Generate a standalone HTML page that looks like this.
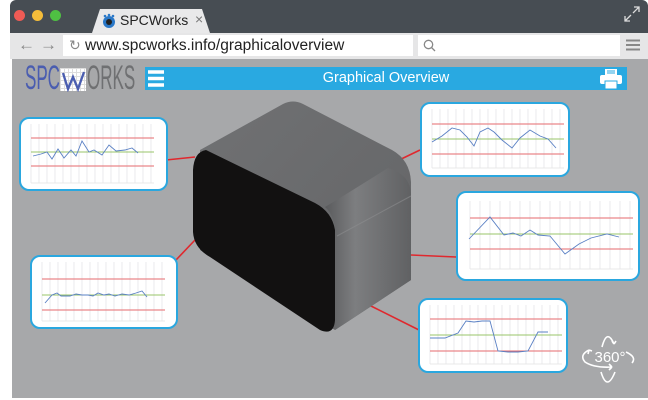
<!DOCTYPE html>
<html><head><meta charset="utf-8"><style>
*{margin:0;padding:0;box-sizing:border-box}
body{width:648px;height:400px;background:#fff;position:relative;overflow:hidden;font-family:"Liberation Sans",sans-serif}
.top{position:absolute;left:10px;top:0;width:638px;height:33px;background:#474d53;border-radius:6px 6px 0 0}
.dot{position:absolute;top:10px;width:11px;height:11px;border-radius:50%}
.tab{position:absolute;left:92px;top:9px;width:118px;height:24px;background:#e9e9ea;clip-path:polygon(8px 0,110px 0,118px 24px,0 24px)}
.addr{position:absolute;left:10px;top:33px;width:638px;height:26px;background:#e6e6e7}
.url{position:absolute;left:63px;top:35px;width:350px;height:21px;background:#fff;font-size:15.5px;color:#222;line-height:21px;padding-left:22px}
.search{position:absolute;left:418px;top:35px;width:202px;height:21px;background:#fff}
.content{position:absolute;left:12px;top:59px;width:636px;height:339px;background:#a7a8aa}
.bar{position:absolute;left:145px;top:67px;width:482px;height:23px;background:#29a9e1;color:#fff;font-size:14.5px;text-align:center;line-height:23px}
.logo{position:absolute;top:61px;font-family:"Liberation Sans",sans-serif;font-size:34px;line-height:34px;transform:scaleX(.5);transform-origin:left}
.card{position:absolute;background:#fff;border:2px solid #2aa7df;border-radius:10px;overflow:hidden}
</style></head><body>
<div class="top">
<div class="dot" style="left:4px;background:#ee5b55"></div>
<div class="dot" style="left:22px;background:#f5bd3a"></div>
<div class="dot" style="left:40px;background:#4fc043"></div>
<svg style="position:absolute;right:8px;top:6px" width="16" height="16" viewBox="0 0 16 16" fill="none" stroke="#ddd" stroke-width="1.3"><path d="M9 7L15 1M10 1h5v5M7 9L1 15M1 10v5h5"/></svg>
</div>
<div class="tab"></div>
<svg style="position:absolute;left:102px;top:13px" width="14" height="16" viewBox="0 0 14 16"><circle cx="7" cy="9" r="6" fill="#2a78c8"/><circle cx="7" cy="9" r="3" fill="#222"/><circle cx="3" cy="3" r="1.3" fill="#2a78c8"/><circle cx="7" cy="2" r="1.3" fill="#2a78c8"/><circle cx="11" cy="3" r="1.3" fill="#2a78c8"/></svg>
<div style="position:absolute;left:120px;top:12px;font-size:14px;color:#222">SPCWorks</div>
<div style="position:absolute;left:195px;top:11px;font-size:14px;color:#777">×</div>
<div class="addr"></div>
<div style="position:absolute;left:18px;top:35px;font-size:17px;color:#888">←</div>
<div style="position:absolute;left:40px;top:35px;font-size:17px;color:#888">→</div>
<div class="url"><span style="position:absolute;left:6px;color:#888;font-size:14px">↻</span>www.spcworks.info/graphicaloverview</div>
<div class="search"><svg style="position:absolute;left:5px;top:4px" width="13" height="13" viewBox="0 0 13 13" fill="none" stroke="#888" stroke-width="1.3"><circle cx="5.5" cy="5.5" r="4.2"/><path d="M8.5 8.5L12 12"/></svg></div>
<svg style="position:absolute;left:626px;top:39px" width="14" height="12"><path d="M0 1.5h14M0 6h14M0 10.5h14" stroke="#888" stroke-width="2"/></svg>
<div class="content"></div>
<div class="logo" style="left:25px;color:#4a5db0">SPC</div>
<div style="position:absolute;left:60px;top:68px;width:26px;height:23px;background:#fff;background-image:linear-gradient(#ddd 1px,transparent 1px),linear-gradient(90deg,#ddd 1px,transparent 1px);background-size:4px 4px"></div>
<svg style="position:absolute;left:60px;top:68px" width="27" height="24"><path d="M3 5L8 21L13 9L18 21L24 4" fill="none" stroke="#4a5db0" stroke-width="2.3"/></svg>
<div class="logo" style="left:87px;color:#6f7072">ORKS</div>
<div class="bar">Graphical Overview</div>
<svg style="position:absolute;left:148px;top:70px" width="16" height="18"><path d="M0 2h16M0 8.5h16M0 15h16" stroke="#fff" stroke-width="3.5"/></svg>
<svg style="position:absolute;left:600px;top:69px" width="22" height="20" viewBox="0 0 22 20"><rect x="5" y="0" width="12" height="7" fill="#fff"/><rect x="0" y="6" width="22" height="9" rx="2" fill="#fff"/><rect x="5" y="12" width="12" height="8" fill="#fff" stroke="#29a9e1" stroke-width="1"/><path d="M7 2h8M7 4h8" stroke="#29a9e1"/></svg>

<svg style="position:absolute;left:0;top:0" width="648" height="400">
<g stroke="#e0282e" stroke-width="1.6">
<line x1="166" y1="160" x2="195" y2="157"/>
<line x1="176" y1="260" x2="195" y2="240"/>
<line x1="420" y1="150" x2="395" y2="162"/>
<line x1="456" y1="257" x2="411" y2="255"/>
<line x1="419" y1="330" x2="371" y2="306"/>
</g>
<defs>
<linearGradient id="tg" x1="0" y1="0" x2="1" y2="1"><stop offset="0" stop-color="#707173"/><stop offset="1" stop-color="#636466"/></linearGradient>
<linearGradient id="rg" x1="0" y1="0" x2="1" y2="0"><stop offset="0" stop-color="#5a5b5d"/><stop offset=".35" stop-color="#7d7e80"/><stop offset="1" stop-color="#606163"/></linearGradient>
</defs>
<path d="M200 150 L283 104 Q293 99 303 104 L392 150 Q410 160 411 182 L411 280 L335 330 L200 250Z" fill="url(#tg)"/>
<path d="M325 207 Q345 195 388 168 Q411 175 411 195 L411 280 L335 330 L335 228 Q333 214 325 207Z" fill="url(#rg)"/>
<path d="M337 236 L411 196" stroke="#8d8e90" stroke-width="1" opacity=".6"/>
<path d="M206 150 Q194 152 193 170 L193 232 Q194 248 210 257 L320 330 Q334 336 335 320 L335 230 Q332 212 315 203 Z" fill="#121111"/>
</svg>

<div class="card" style="left:19px;top:117px;width:149px;height:74px"><svg width="145" height="70" viewBox="0 0 145 70"><g stroke="#e2e2e4" stroke-width=".7"><path d="M10 5V64M18 5V64M26 5V64M34 5V64M42 5V64M50 5V64M58 5V64M66 5V64M74 5V64M82 5V64M90 5V64M98 5V64M106 5V64M114 5V64M122 5V64M130 5V64M10 64H133"/></g><path d="M10 19H133M10 47H133" stroke="#e56a6e"/><path d="M10 33H133" stroke="#98c46a"/><polyline fill="none" stroke="#5a80c4" stroke-width=".9" points="12,37 20,35 26,33 31,40 37,30 43,39 50,31 55,37 61,22 68,33 73,31 81,36 88,26 95,32 104,31 111,29 117,34"/></svg></div>

<div class="card" style="left:30px;top:255px;width:148px;height:74px"><svg width="144" height="70" viewBox="0 0 144 70"><path d="M10 5V64M18 5V64M26 5V64M34 5V64M42 5V64M50 5V64M58 5V64M66 5V64M74 5V64M82 5V64M90 5V64M98 5V64M106 5V64M114 5V64M122 5V64M130 5V64M10 64H133" stroke="#e2e2e4" stroke-width=".7"/><path d="M10 22H133M10 53H133" stroke="#e56a6e"/><path d="M10 38H133" stroke="#98c46a"/><polyline fill="none" stroke="#5a80c4" stroke-width=".9" points="13,46 20,38 25,36 29,39 38,39 44,37 50,38 56,38 61,39 66,36 72,38 77,37 83,39 90,37 97,38 104,36 110,34 115,40"/></svg></div>

<div class="card" style="left:420px;top:102px;width:150px;height:75px"><svg width="146" height="71" viewBox="0 0 146 71"><path d="M10 5V64M18 5V64M26 5V64M34 5V64M42 5V64M50 5V64M58 5V64M66 5V64M74 5V64M82 5V64M90 5V64M98 5V64M106 5V64M114 5V64M122 5V64M130 5V64M138 5V64M10 64H142" stroke="#e2e2e4" stroke-width=".7"/><path d="M10 20H142M10 50H142" stroke="#e56a6e"/><path d="M10 35H142" stroke="#98c46a"/><polyline fill="none" stroke="#5a80c4" stroke-width=".9" points="10,38 20,32 30,24 38,26 45,33 52,42 58,28 66,24 72,28 80,36 90,44 98,34 108,26 118,32 126,35 134,44"/></svg></div>

<div class="card" style="left:456px;top:191px;width:184px;height:90px"><svg width="180" height="86" viewBox="0 0 180 86"><path d="M12 8V76M22 8V76M32 8V76M42 8V76M52 8V76M62 8V76M72 8V76M82 8V76M92 8V76M102 8V76M112 8V76M122 8V76M132 8V76M142 8V76M152 8V76M162 8V76M172 8V76M12 76H175" stroke="#e2e2e4" stroke-width=".7"/><path d="M12 25H175M12 56H175" stroke="#e56a6e"/><path d="M12 41H175" stroke="#98c46a"/><polyline fill="none" stroke="#5a80c4" stroke-width=".9" points="11,46 32,24 46,42 55,40 63,43 72,37 80,42 92,43 107,61 121,51 133,45 149,41 161,44"/></svg></div>

<div class="card" style="left:418px;top:298px;width:150px;height:75px"><svg width="146" height="71" viewBox="0 0 146 71"><path d="M10 5V64M18 5V64M26 5V64M34 5V64M42 5V64M50 5V64M58 5V64M66 5V64M74 5V64M82 5V64M90 5V64M98 5V64M106 5V64M114 5V64M122 5V64M130 5V64M138 5V64M10 64H142" stroke="#e2e2e4" stroke-width=".7"/><path d="M10 19H142M10 51H142" stroke="#e56a6e"/><path d="M10 35H142" stroke="#98c46a"/><polyline fill="none" stroke="#5a80c4" stroke-width=".9" points="10,38 25,38 38,33 46,21 54,22 62,21 70,21 78,51 88,52 98,52 108,51 118,32 128,32"/></svg></div>

<svg style="position:absolute;left:579px;top:330px" width="60" height="60" viewBox="0 0 60 60" fill="none" stroke="#fff" stroke-width="1.6"><path d="M23 17Q28 -2 35 14M35 14l-2 -3M35 14l2-3"/><path d="M22 42Q28 62 36 42"/><path d="M10 20Q0 25 6 32Q15 38 33 37M33 37l-3-3M33 37l-3 3M47 22Q58 27 53 33"/><path d="M10 20l-1 4M10 20l3 1"/><text x="31" y="32" fill="#fff" stroke="none" font-size="15" text-anchor="middle" font-family="Liberation Sans">360°</text></svg>
</body></html>
